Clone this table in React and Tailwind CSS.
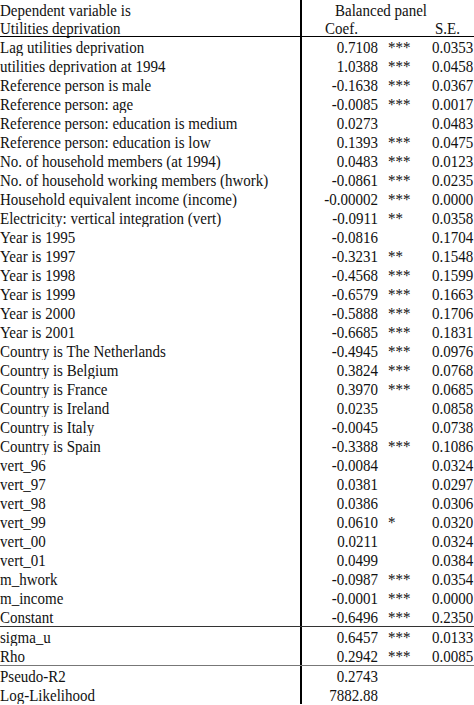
import React from "react";

const rows1 = [
  ["Lag utilities deprivation", "0.7108", "***", "0.0353"],
  ["utilities deprivation at 1994", "1.0388", "***", "0.0458"],
  ["Reference person is male", "-0.1638", "***", "0.0367"],
  ["Reference person: age", "-0.0085", "***", "0.0017"],
  ["Reference person: education is medium", "0.0273", "", "0.0483"],
  ["Reference person: education is low", "0.1393", "***", "0.0475"],
  ["No. of household members (at 1994)", "0.0483", "***", "0.0123"],
  ["No. of household working members (hwork)", "-0.0861", "***", "0.0235"],
  ["Household equivalent income (income)", "-0.00002", "***", "0.0000"],
  ["Electricity: vertical integration (vert)", "-0.0911", "**", "0.0358"],
  ["Year is 1995", "-0.0816", "", "0.1704"],
  ["Year is 1997", "-0.3231", "**", "0.1548"],
  ["Year is 1998", "-0.4568", "***", "0.1599"],
  ["Year is 1999", "-0.6579", "***", "0.1663"],
  ["Year is 2000", "-0.5888", "***", "0.1706"],
  ["Year is 2001", "-0.6685", "***", "0.1831"],
  ["Country is The Netherlands", "-0.4945", "***", "0.0976"],
  ["Country is Belgium", "0.3824", "***", "0.0768"],
  ["Country is France", "0.3970", "***", "0.0685"],
  ["Country is Ireland", "0.0235", "", "0.0858"],
  ["Country is Italy", "-0.0045", "", "0.0738"],
  ["Country is Spain", "-0.3388", "***", "0.1086"],
  ["vert_96", "-0.0084", "", "0.0324"],
  ["vert_97", "0.0381", "", "0.0297"],
  ["vert_98", "0.0386", "", "0.0306"],
  ["vert_99", "0.0610", "*", "0.0320"],
  ["vert_00", "0.0211", "", "0.0324"],
  ["vert_01", "0.0499", "", "0.0384"],
  ["m_hwork", "-0.0987", "***", "0.0354"],
  ["m_income", "-0.0001", "***", "0.0000"],
  ["Constant", "-0.6496", "***", "0.2350"],
];
const rows2 = [
  ["sigma_u", "0.6457", "***", "0.0133"],
  ["Rho", "0.2942", "***", "0.0085"],
];
const rows3 = [
  ["Pseudo-R2", "0.2743", "", ""],
  ["Log-Likelihood", "7882.88", "", ""],
];

function T({ children }) {
  return <span className="inline-block scale-y-[1.15] pt-[2px]">{children}</span>;
}

function Row({ r }) {
  return (
    <div className="flex h-[19px] items-center">
      <div className="w-[302px] shrink-0 h-full border-r-2 border-black flex items-center whitespace-nowrap overflow-hidden">
        <T>{r[0]}</T>
      </div>
      <div className="w-[76px] shrink-0 text-right whitespace-nowrap">
        <T>{r[1]}</T>
      </div>
      <div className="w-[54px] shrink-0 pl-[10px] whitespace-nowrap">
        <T>{r[2]}</T>
      </div>
      <div className="whitespace-nowrap">
        <T>{r[3]}</T>
      </div>
    </div>
  );
}

export default function App() {
  return (
    <div
      className="w-[474px] h-[705px] overflow-hidden bg-white text-[#111] text-[15px] leading-none"
      style={{ fontFamily: '"Liberation Serif", "Times New Roman", serif' }}
    >
      <div className="border-b-[1.5px] border-black">
        <div className="flex h-[18px] items-center">
          <div className="w-[302px] shrink-0 h-full border-r-2 border-black flex items-center">
            <T>Dependent variable is</T>
          </div>
          <div className="pl-[33px]">
            <T>Balanced panel</T>
          </div>
        </div>
        <div className="flex h-[18px] items-center">
          <div className="w-[302px] shrink-0 h-full border-r-2 border-black flex items-center">
            <T>Utilities deprivation</T>
          </div>
          <div className="w-[130px] shrink-0 pl-[23px]">
            <T>Coef.</T>
          </div>
          <div className="pl-[3px]">
            <T>S.E.</T>
          </div>
        </div>
      </div>
      <div className="border-b-[1.5px] border-[#333]">
        {rows1.map((r, i) => (
          <Row key={i} r={r} />
        ))}
      </div>
      <div className="border-b-[1.5px] border-[#777]">
        {rows2.map((r, i) => (
          <Row key={i} r={r} />
        ))}
      </div>
      <div>
        {rows3.map((r, i) => (
          <Row key={i} r={r} />
        ))}
      </div>
    </div>
  );
}
